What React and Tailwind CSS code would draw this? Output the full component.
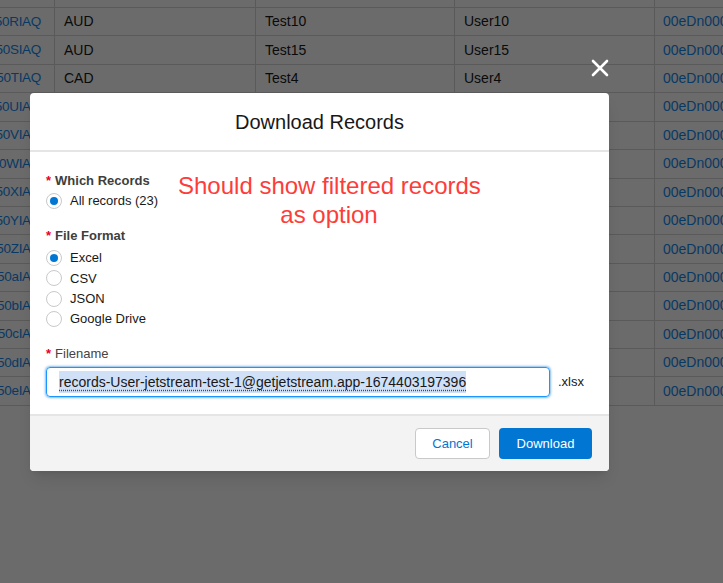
import { useState } from "react";

const rows = [
  ["0015e0000050RIAQ", "AUD", "Test10", "User10"],
  ["0015e0000050SIAQ", "AUD", "Test15", "User15"],
  ["0015e0000050TIAQ", "CAD", "Test4", "User4"],
  ["0015e0000050UIAQ", "USD", "Test5", "User5"],
  ["0015e0000050VIAQ", "USD", "Test6", "User6"],
  ["0015e0000050WIAQ", "USD", "Test7", "User7"],
  ["0015e0000050XIAQ", "USD", "Test8", "User8"],
  ["0015e0000050YIAQ", "USD", "Test9", "User9"],
  ["0015e0000050ZIAQ", "USD", "Test11", "User11"],
  ["0015e0000050aIAQ", "USD", "Test12", "User12"],
  ["0015e0000050bIAQ", "USD", "Test13", "User13"],
  ["0015e0000050cIAQ", "USD", "Test14", "User14"],
  ["0015e0000050dIAQ", "USD", "Test16", "User16"],
  ["0015e0000050eIAQ", "USD", "Test17", "User17"],
];

const Radio = ({ checked, label }) => (
  <label className="flex items-center h-5 gap-2 text-[13px] text-[#181818]">
    <span className="w-4 h-4 rounded-full border border-[#c9c9c9] bg-white flex items-center justify-center">
      {checked && <span className="w-2 h-2 rounded-full bg-[#0176d3]" />}
    </span>
    {label}
  </label>
);

const FieldLabel = ({ children, bold = true }) => (
  <div className={`flex items-center h-[18px] text-[13px] ${bold ? "font-bold text-[#3e3e3c]" : "text-[#444]"}`}>
    <span className="text-[#ea001e] mr-1 font-bold">*</span>
    {children}
  </div>
);

const App = () => {
  const [format] = useState("Excel");

  return (
    <div className="relative w-[723px] h-[583px] overflow-hidden bg-white" style={{ fontFamily: '"Liberation Sans", Arial, sans-serif' }}>
      {/* table behind the modal */}
      <div className="flex flex-col text-[14px] text-[#181818]">
        <div className="flex h-2 border-b border-[#d6d6d6]">
          <div className="w-[55px] border-r border-[#d6d6d6]" />
          <div className="w-[201px] border-r border-[#d6d6d6]" />
          <div className="w-[199px] border-r border-[#d6d6d6]" />
          <div className="w-[200px] border-r border-[#d6d6d6]" />
        </div>
        {rows.map((r) => (
          <div key={r[0]} className="flex h-[28.43px] items-center border-b border-[#d6d6d6] whitespace-nowrap">
            <div className="w-[55px] h-full flex items-center justify-end overflow-hidden border-r border-[#d6d6d6] pr-[13px] text-[13.5px] tracking-[-0.3px] text-[#1589ee]">{r[0]}</div>
            <div className="w-[201px] h-full flex items-center pl-[9px] border-r border-[#d6d6d6]">{r[1]}</div>
            <div className="w-[199px] h-full flex items-center pl-[9px] border-r border-[#d6d6d6]">{r[2]}</div>
            <div className="w-[200px] h-full flex items-center pl-[9px] border-r border-[#d6d6d6]">{r[3]}</div>
            <div className="flex-1 h-full flex items-center pl-[8px] overflow-hidden text-[#1589ee]">00eDn000001AbCdE</div>
          </div>
        ))}
      </div>

      {/* backdrop */}
      <div className="absolute inset-0 bg-black/[0.58]" />

      {/* close */}
      <button className="absolute left-[590px] top-[58px] w-5 h-5 flex items-center justify-center">
        <svg width="18" height="18" viewBox="0 0 18 18" fill="none" stroke="white" strokeWidth="2.6" strokeLinecap="round">
          <path d="M2 2L16 16M16 2L2 16" />
        </svg>
      </button>

      {/* modal */}
      <div className="absolute left-[30px] top-[93px] w-[579px] bg-white rounded-[4px] overflow-hidden shadow-lg">
        <div className="h-[59px] flex items-center justify-center border-b-2 border-[#e5e5e5] text-[20px] text-[#181818]">
          Download Records
        </div>

        <div className="relative px-4 pt-5 pb-[17px]">
          <FieldLabel>Which Records</FieldLabel>
          <div className="flex items-center h-[22px]">
            <Radio checked label="All records (23)" />
          </div>

          <div className="mt-[15px]">
            <FieldLabel>File Format</FieldLabel>
          </div>
          <div className="flex flex-col mt-[3px] gap-[0.3px]">
            {["Excel", "CSV", "JSON", "Google Drive"].map((f) => (
              <Radio key={f} checked={format === f} label={f} />
            ))}
          </div>

          <div className="mt-4">
            <FieldLabel bold={false}>Filename</FieldLabel>
          </div>
          <div className="flex items-center mt-1 gap-2">
            <div className="w-[504px] h-[30px] flex items-center border border-[#1b96ff] rounded-[4px] shadow-[0_0_3px_#0176d3] pl-3 text-[14px] text-[#181818] whitespace-nowrap overflow-hidden">
              <span className="bg-[#cfe0f7] leading-[22px] underline decoration-dotted decoration-[#ea001e] underline-offset-[3px]">
                records-User-jetstream-test-1@getjetstream.app-1674403197396
              </span>
            </div>
            <span className="text-[13px] text-[#181818]">.xlsx</span>
          </div>

          {/* annotation */}
          <div className="absolute left-[148px] top-[19px] w-[302px] text-center whitespace-nowrap text-[24px] leading-[29px] text-[#fc3d39]">
            Should show filtered records
            <br />
            as option
          </div>
        </div>

        <div className="h-[57px] flex items-center justify-end gap-[9px] pr-[17px] bg-[#f3f3f3] border-t-2 border-[#e5e5e5]">
          <button className="w-[75px] h-[31px] rounded-[4px] border border-[#c9c9c9] bg-white text-[13px] text-[#0176d3]">Cancel</button>
          <button className="w-[93px] h-[31px] rounded-[4px] bg-[#0176d3] text-[13px] text-white">Download</button>
        </div>
      </div>
    </div>
  );
};

export default App;
